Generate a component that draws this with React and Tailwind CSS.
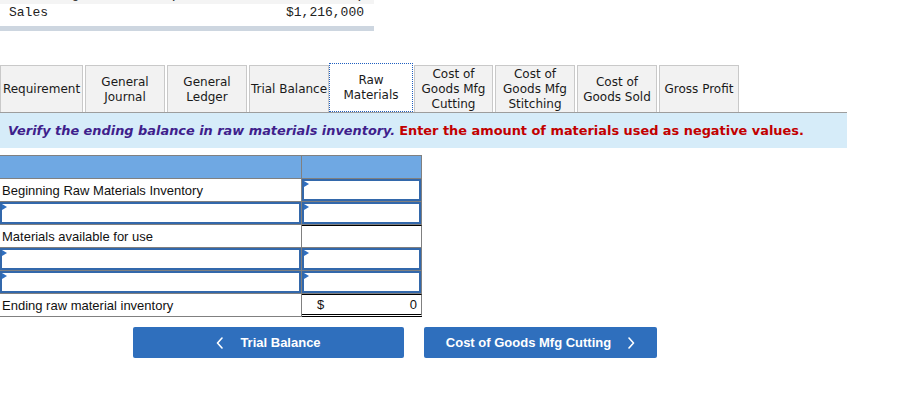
// Raw materials worksheet tab with tab strip, instruction bar and entry table.

const tabs = [
  { label: ['Requirement'], w: 'w-[83px]', ml: 'ml-0' },
  { label: ['General', 'Journal'], w: 'w-[80px]', ml: 'ml-[2px]' },
  { label: ['General', 'Ledger'], w: 'w-[80px]', ml: 'ml-[2px]' },
  { label: ['Trial Balance'], w: 'w-[80px]', ml: 'ml-[2px]' },
  { label: ['Raw', 'Materials'], w: 'w-[84px]', ml: 'ml-0', active: true },
  { label: ['Cost of', 'Goods Mfg', 'Cutting'], w: 'w-[79px]', ml: 'ml-[1px]' },
  { label: ['Cost of', 'Goods Mfg', 'Stitching'], w: 'w-[80px]', ml: 'ml-[2px]' },
  { label: ['Cost of', 'Goods Sold'], w: 'w-[80px]', ml: 'ml-[2px]' },
  { label: ['Gross Profit'], w: 'w-[80px]', ml: 'ml-[2px]' },
]

function Tab({ label, w, ml, active }) {
  const base = active
    ? 'h-[49px] border border-dotted border-[#1f5fc0] bg-white'
    : 'h-[47px] border border-b-0 border-[#c9c9c9] bg-[#f2f2f2]'
  return (
    <div className={`${w} ${ml} ${base} flex shrink-0 flex-col items-center justify-center pt-[1px] text-center text-[12px] leading-[15px] text-[#1a1a1a]`}>
      {label.map((l) => (
        <span key={l} className="whitespace-nowrap">{l}</span>
      ))}
    </div>
  )
}

function Flag() {
  return (
    <span className="absolute left-0 top-0 h-0 w-0 border-y-[3px] border-l-[5px] border-y-transparent border-l-[#2f6fc0]" />
  )
}

function InputBox() {
  return (
    <div className="relative h-full w-full border-2 border-[#3368ab] bg-white">
      <Flag />
    </div>
  )
}

function Row({ label, left, right, rightClass = '' }) {
  return (
    <>
      <div className="h-[23px] border-b border-r border-[#808080]">
        {left === 'input' ? (
          <InputBox />
        ) : (
          <div className="flex h-full items-center pl-[2px] pt-[1px] text-[13px]">{label}</div>
        )}
      </div>
      <div className={`h-[23px] border-b border-r border-[#808080] ${rightClass}`}>
        {right === 'input' ? <InputBox /> : right}
      </div>
    </>
  )
}

function Chevron({ dir }) {
  return (
    <svg viewBox="0 0 8 12" className="h-[12px] w-[8px]" fill="none" stroke="white" strokeWidth="1.6" strokeLinecap="round" strokeLinejoin="round">
      {dir === 'left' ? <path d="M6 1 1.5 6 6 11" /> : <path d="M2 1 6.5 6 2 11" />}
    </svg>
  )
}

export default function App() {
  return (
    <div className="h-[414px] w-[910px] overflow-hidden bg-white font-['DejaVu_Sans',Verdana,sans-serif]">
      <div className="w-[374px] font-['Liberation_Mono',monospace] text-[13px] text-[#222]">
        <div className="h-[4px] overflow-hidden bg-[#f4f4f4]">
          <div className="-mt-[13px] flex justify-between pl-[9px] pr-[10px] leading-[16px]">
            <span>Stitching</span>
            <span>(234 of 45000 units sold)</span>
          </div>
        </div>
        <div className="flex h-[22px] items-start justify-between pl-[9px] pr-[10px] pt-[1px] leading-[16px]">
          <span>Sales</span>
          <span>$1,216,000</span>
        </div>
        <div className="h-[5px] bg-[#cdd6e0]" />
      </div>

      <div className="mt-[32px] w-[847px]">
        <div className="flex h-[49px] items-end">
          {tabs.map((t) => (
            <Tab key={t.label.join(' ')} {...t} />
          ))}
        </div>
        <div className="flex h-[36px] items-center whitespace-nowrap border-t border-[#9d9d9d] bg-[#d6ecf9] pl-[8px] pt-[1px] text-[12.9px] font-bold">
          <span className="italic text-[#3f1f8c]">Verify the ending balance in raw materials inventory.</span>
          <span className="ml-[4px] text-[#c20000]">Enter the amount of materials used as negative values.</span>
        </div>
      </div>

      <div className="mt-[7px] grid w-[422px] grid-cols-[302px_120px] border-t border-[#808080] font-['Liberation_Sans',Arial,sans-serif] text-[#111]">
        <div className="h-[23px] border-b border-r border-[#808080] bg-[#6fa8e3]" />
        <div className="h-[23px] border-b border-r border-[#808080] bg-[#6fa8e3]" />
        <Row label="Beginning Raw Materials Inventory" right="input" />
        <Row left="input" right="input" />
        <Row label="Materials available for use" rightClass="border-t border-t-black" />
        <Row left="input" right="input" />
        <Row left="input" right="input" />
        <Row
          label="Ending raw material inventory"
          rightClass="border-t border-t-black border-b-[3px] border-b-black border-double"
          right={
            <div className="flex h-full items-center justify-between pl-[15px] pr-[4px] pt-[1px] text-[13px]">
              <span>$</span>
              <span>0</span>
            </div>
          }
        />
      </div>

      <div className="ml-[133px] mt-[10px] flex gap-[20px] font-['Liberation_Sans',Arial,sans-serif] text-[13px] font-bold text-white">
        <button className="flex h-[31px] w-[271px] items-center justify-center gap-[16px] rounded-[2px] bg-[#2f6fbd]">
          <Chevron dir="left" />
          <span>Trial Balance</span>
        </button>
        <button className="flex h-[31px] w-[233px] items-center justify-center gap-[16px] rounded-[2px] bg-[#2f6fbd]">
          <span>Cost of Goods Mfg Cutting</span>
          <Chevron dir="right" />
        </button>
      </div>
    </div>
  )
}
